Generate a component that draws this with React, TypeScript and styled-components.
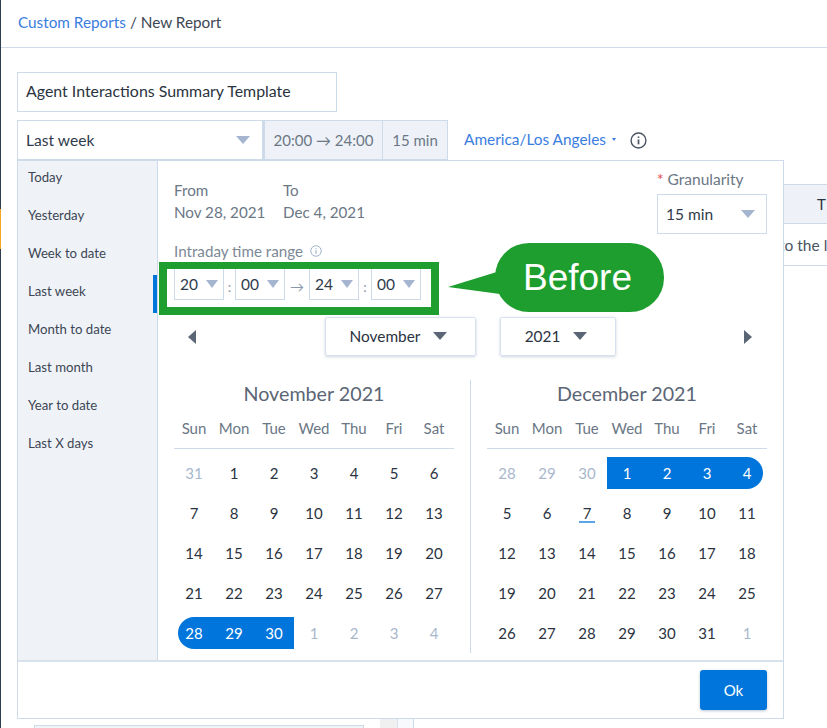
import * as React from 'react'
import styled, { createGlobalStyle } from 'styled-components'

const GlobalStyle = createGlobalStyle`
  html, body {
    margin: 0;
    padding: 0;
    background: #fff;
  }
  body {
    font-family: 'Lato', 'Noto Sans', sans-serif;
    color: #2f3b4c;
  }
`

const Page = styled.div`
  position: relative;
  width: 827px;
  height: 728px;
  overflow: hidden;
  background: #fff;
`

const AppEdge = styled.div`
  position: absolute;
  left: 0;
  top: 0;
  bottom: 0;
  width: 1px;
  background: #2c3e50;
  &::after {
    content: '';
    position: absolute;
    left: 0;
    top: 209px;
    height: 40px;
    width: 1px;
    background: #f5a623;
  }
`

const Header = styled.header`
  height: 47px;
  box-sizing: border-box;
  display: flex;
  align-items: center;
  padding: 0 0 3px 18px;
  font-size: 15.3px;
  margin-bottom: 1px;
  box-shadow: 0 1px 0 #cfdbe8;
`

const Crumb = styled.a`
  color: #3a7de0;
`

const CrumbRest = styled.span`
  margin-left: 4px;
  color: #3d4654;
`

const Form = styled.div`
  padding: 24px 0 0 17px;
`

const NameInput = styled.div`
  width: 320px;
  height: 40px;
  box-sizing: border-box;
  border: 1px solid #cddaea;
  padding: 0 0 4px 8px;
  display: flex;
  align-items: center;
  font-size: 15.9px;
  color: #2a3340;
`

const Toolbar = styled.div`
  display: flex;
  align-items: center;
  margin-top: 8px;
  height: 40px;
`

const MainSelect = styled.div`
  width: 246px;
  height: 40px;
  box-sizing: border-box;
  border: 1px solid #cddaea;
  padding: 0 12px 0 8px;
  display: flex;
  align-items: center;
  justify-content: space-between;
  font-size: 15.6px;
`

const Chip = styled.div<{ $w: number; $first?: boolean }>`
  width: ${p => p.$w}px;
  height: 40px;
  box-sizing: border-box;
  border: 1px solid #cddaea;
  border-left-width: ${p => (p.$first ? 2 : 1)}px;
  background: #eef2f8;
  color: #6b7785;
  font-size: 15px;
  display: flex;
  align-items: center;
  justify-content: center;
  margin-left: ${p => (p.$first ? 0 : -1)}px;
`

const Zone = styled.a`
  margin-left: 16px;
  padding-bottom: 2px;
  color: #3a7de0;
  font-size: 15.4px;
  display: flex;
  align-items: center;
  gap: 6px;
`

const InfoWrap = styled.span`
  margin-left: 14px;
  display: flex;
`

const Caret = styled.span<{ $color?: string; $w?: number; $h?: number }>`
  display: inline-block;
  width: 0;
  height: 0;
  border-left: ${p => p.$w ?? 7}px solid transparent;
  border-right: ${p => p.$w ?? 7}px solid transparent;
  border-top: ${p => p.$h ?? 8}px solid ${p => p.$color ?? '#a5b5cf'};
`

const BehindTable = styled.div`
  margin: 24px 0 0 784px;
  width: 60px;
`

const BehindHead = styled.div`
  height: 40px;
  box-sizing: border-box;
  background: #eef2f8;
  border-top: 1px solid #cddaea;
  border-bottom: 1px solid #cddaea;
  display: flex;
  align-items: center;
  padding-left: 33px;
  font-size: 15px;
  color: #2a3340;
`

const BehindRow = styled.div`
  height: 42px;
  box-sizing: border-box;
  border-bottom: 1px solid #cddaea;
  padding: 13px 0 0 0;
  font-size: 15.5px;
  line-height: 17px;
  white-space: nowrap;
  color: #4a5462;
  text-indent: -5px;
`

const Popover = styled.div`
  position: absolute;
  left: 17px;
  top: 160px;
  width: 767px;
  height: 559px;
  box-sizing: border-box;
  border: 1px solid #cddaea;
  background: #fff;
  display: flex;
  flex-direction: column;
`

const PopBody = styled.div`
  display: flex;
  height: 501px;
  flex: none;
  box-sizing: border-box;
  border-bottom: 2px solid #d8e2ee;
`

const Sidebar = styled.ul`
  list-style: none;
  margin: 0;
  padding: 0;
  width: 140px;
  box-sizing: border-box;
  flex: none;
  background: #eff3f8;
  border-right: 1px solid #cddaea;
`

const SideItem = styled.li<{ $active?: boolean }>`
  position: relative;
  height: 38px;
  box-sizing: border-box;
  display: flex;
  align-items: center;
  padding: 0 0 6px 10px;
  font-size: 13.2px;
  color: #3d4654;
  ${p =>
    p.$active &&
    `&::after {
      content: '';
      position: absolute;
      right: 0;
      top: 0;
      width: 4px;
      height: 38px;
      background: #0075db;
    }`}
`

const Main = styled.div`
  flex: 1;
  padding: 0 16px;
  display: flex;
  flex-direction: column;
`

const TopRow = styled.div`
  display: flex;
  justify-content: space-between;
  height: 83px;
`

const Range = styled.div`
  display: flex;
  padding-top: 18px;
`

const RangeCol = styled.div<{ $w: number }>`
  width: ${p => p.$w}px;
  font-size: 15.2px;
  color: #6b7785;
  line-height: 22px;
`

const Gran = styled.div`
  width: 110px;
  padding-top: 9px;
`

const GranLabel = styled.div`
  font-size: 15.5px;
  line-height: 18px;
  color: #6b7785;
  margin-bottom: 6px;
  span {
    color: #e5484d;
    margin-right: 4px;
  }
`

const GranSelect = styled.div`
  height: 40px;
  box-sizing: border-box;
  border: 1px solid #cddaea;
  padding: 0 11px 0 8px;
  display: flex;
  align-items: center;
  justify-content: space-between;
  font-size: 15.5px;
`

const IntraLabel = styled.div`
  height: 16px;
  display: flex;
  align-items: center;
  gap: 7px;
  font-size: 15.2px;
  color: #7d8896;
  margin-top: -1px;
`

const TimeRow = styled.div`
  display: flex;
  align-items: center;
  margin-top: 9px;
  height: 32px;
`

const TimeSelect = styled.div`
  width: 50px;
  height: 32px;
  box-sizing: border-box;
  border: 1px solid #cddaea;
  padding: 0 5px 1px 5px;
  display: flex;
  align-items: center;
  justify-content: space-between;
  font-size: 15.5px;
`

const TimeSep = styled.span<{ $w: number }>`
  width: ${p => p.$w}px;
  text-align: center;
  color: #8a97a8;
  font-size: 14px;
  padding-top: 5px;
`

const NavRow = styled.div`
  display: flex;
  align-items: center;
  margin-top: 17px;
  height: 39px;
  padding: 0 15px 0 14px;
`

const NavArrow = styled.span<{ $dir: 'left' | 'right' }>`
  width: 0;
  height: 0;
  border-top: 7px solid transparent;
  border-bottom: 7px solid transparent;
  ${p =>
    p.$dir === 'left'
      ? 'border-right: 8px solid #5a6675;'
      : 'border-left: 8px solid #5a6675;'}
`

const NavSelects = styled.div`
  flex: 1;
  display: flex;
  padding-left: 129px;
  gap: 24px;
`

const NavSelect = styled.div<{ $w: number }>`
  width: ${p => p.$w}px;
  height: 39px;
  box-sizing: border-box;
  border: 1px solid #d8e2ee;
  border-radius: 2px;
  box-shadow: 0 1px 3px rgba(60, 90, 130, 0.25);
  display: flex;
  align-items: center;
  justify-content: center;
  gap: 13px;
  padding: 0 4px 1px 0;
  font-size: 15.4px;
  color: #2a3340;
`

const Calendars = styled.div`
  display: flex;
  margin-top: 24px;
  height: 273px;
`

const Month = styled.div`
  width: 280px;
  flex: none;
`

const MonthTitle = styled.div`
  height: 28px;
  line-height: 28px;
  text-align: center;
  font-size: 19.7px;
  color: #5b6675;
`

const WeekRow = styled.div`
  display: grid;
  grid-template-columns: repeat(7, 40px);
  height: 41px;
  box-sizing: border-box;
  border-bottom: 1px solid #cddaea;
  align-items: center;
  text-align: center;
  font-size: 15px;
  color: #6b7785;
`

const DayGrid = styled.div`
  display: grid;
  grid-template-columns: repeat(7, 40px);
  grid-auto-rows: 40px;
  margin-top: 4px;
`

const DayCell = styled.div<{ $muted?: boolean; $sel?: 'start' | 'mid' | 'end' }>`
  display: flex;
  align-items: center;
  justify-content: center;
  height: 32px;
  margin-top: 4px;
  font-size: 15px;
  color: ${p => (p.$sel ? '#fff' : p.$muted ? '#a9b7cc' : '#2a3340')};
  background: ${p => (p.$sel ? '#0075db' : 'transparent')};
  ${p => p.$sel === 'start' && 'margin-left: 4px; padding-right: 4px; border-radius: 16px 0 0 16px;'}
  ${p => p.$sel === 'end' && 'margin-right: 4px; padding-left: 4px; border-radius: 0 16px 16px 0;'}
`

const Today = styled.span`
  display: inline-block;
  padding: 0 4px 0;
  line-height: 16px;
  border-bottom: 2px solid #5aa5e8;
  margin-bottom: -2px;
`

const MonthDivider = styled.div`
  width: 1px;
  margin: 0 16px;
  background: #cddaea;
  flex: none;
`

const Footer = styled.div`
  flex: 1;
  display: flex;
  justify-content: flex-end;
  padding: 8px 16px 0 0;
`

const OkButton = styled.button`
  width: 67px;
  height: 40px;
  border: none;
  border-radius: 3px;
  background: #0075db;
  color: #fff;
  font-family: inherit;
  font-size: 15px;
  box-shadow: 0 1px 3px rgba(60, 90, 130, 0.35);
`

const Highlight = styled.div`
  position: absolute;
  left: 159px;
  top: 262px;
  width: 280px;
  height: 53px;
  box-sizing: border-box;
  border: 8px solid #1e9e2e;
  border-top-width: 7px;
  pointer-events: none;
`

const Bubble = styled.div`
  position: absolute;
  left: 495px;
  top: 243px;
  width: 169px;
  height: 69px;
  border-radius: 34px;
  background: #1e9e2e;
  color: #fff;
  font-family: 'Liberation Sans', Arial, sans-serif;
  font-size: 37px;
  display: flex;
  align-items: center;
  justify-content: center;
  padding-right: 4px;
  box-sizing: border-box;
  &::before {
    content: '';
    position: absolute;
    left: -47px;
    top: 28px;
    width: 52px;
    height: 23px;
    background: #1e9e2e;
    clip-path: polygon(0 70%, 100% 0, 100% 100%);
  }
`

const BackBox = styled.div`
  position: absolute;
  left: 34px;
  top: 725px;
  width: 330px;
  height: 10px;
  box-sizing: border-box;
  border: 1px solid #cddaea;
  background: #f1f4f9;
`

const BackGutter = styled.div`
  position: absolute;
  left: 380px;
  top: 719px;
  width: 17px;
  height: 9px;
  background: #f0f0f0;
  border-right: 1px solid #d8e2ee;
`

const BackTrack = styled.div`
  position: absolute;
  left: 398px;
  top: 719px;
  width: 15px;
  height: 9px;
  background: #f7f9fc;
  border-right: 1px solid #cddaea;
`

type DayT = { n: number; muted?: boolean; sel?: 'start' | 'mid' | 'end'; today?: boolean }

const WEEKDAYS = ['Sun', 'Mon', 'Tue', 'Wed', 'Thu', 'Fri', 'Sat']
const PRESETS = ['Today', 'Yesterday', 'Week to date', 'Last week', 'Month to date', 'Last month', 'Year to date', 'Last X days']

const NOV: DayT[] = [
  { n: 31, muted: true },
  ...Array.from({ length: 27 }, (_, i) => ({ n: i + 1 })),
  { n: 28, sel: 'start' as const },
  { n: 29, sel: 'mid' as const },
  { n: 30, sel: 'mid' as const },
  { n: 1, muted: true },
  { n: 2, muted: true },
  { n: 3, muted: true },
  { n: 4, muted: true },
]

const DEC: DayT[] = [
  { n: 28, muted: true },
  { n: 29, muted: true },
  { n: 30, muted: true },
  { n: 1, sel: 'mid' },
  { n: 2, sel: 'mid' },
  { n: 3, sel: 'mid' },
  { n: 4, sel: 'end' },
  ...Array.from({ length: 27 }, (_, i) => ({ n: i + 5, today: i === 2 })),
  { n: 1, muted: true },
]

function InfoIcon({ size, color }: { size: number; color: string }) {
  return (
    <svg width={size} height={size} viewBox="0 0 16 16" fill="none" stroke={color} strokeWidth="1.3">
      <circle cx="8" cy="8" r="7" />
      <path d="M8 7v4.6" strokeWidth="1.6" />
      <path d="M8 4.2v1.4" strokeWidth="1.6" />
    </svg>
  )
}

function MonthView({ title, days }: { title: string; days: DayT[] }) {
  return (
    <Month>
      <MonthTitle>{title}</MonthTitle>
      <WeekRow>
        {WEEKDAYS.map(d => (
          <span key={d}>{d}</span>
        ))}
      </WeekRow>
      <DayGrid>
        {days.map((d, i) => (
          <DayCell key={i} $muted={d.muted} $sel={d.sel}>
            {d.today ? <Today>{d.n}</Today> : d.n}
          </DayCell>
        ))}
      </DayGrid>
    </Month>
  )
}

export default function App() {
  return (
    <Page>
      <GlobalStyle />
      <AppEdge />
      <Header>
        <Crumb>Custom Reports</Crumb>
        <CrumbRest>/ New Report</CrumbRest>
      </Header>
      <Form>
        <NameInput>Agent Interactions Summary Template</NameInput>
        <Toolbar>
          <MainSelect>
            Last week
            <Caret />
          </MainSelect>
          <Chip $w={120} $first>20:00 → 24:00</Chip>
          <Chip $w={66}>15 min</Chip>
          <Zone>
            America/Los Angeles
            <Caret $color="#3a7de0" $w={2} $h={3} />
          </Zone>
          <InfoWrap>
            <InfoIcon size={17} color="#4a5462" />
          </InfoWrap>
        </Toolbar>
      </Form>
      <BehindTable>
        <BehindHead>T</BehindHead>
        <BehindRow>to the l</BehindRow>
      </BehindTable>
      <BackBox />
      <BackGutter />
      <BackTrack />
      <Popover>
        <PopBody>
          <Sidebar>
            {PRESETS.map(p => (
              <SideItem key={p} $active={p === 'Last week'}>
                {p}
              </SideItem>
            ))}
          </Sidebar>
          <Main>
            <TopRow>
              <Range>
                <RangeCol $w={109}>
                  From
                  <br />
                  Nov 28, 2021
                </RangeCol>
                <RangeCol $w={100}>
                  To
                  <br />
                  Dec 4, 2021
                </RangeCol>
              </Range>
              <Gran>
                <GranLabel>
                  <span>*</span>Granularity
                </GranLabel>
                <GranSelect>
                  15 min
                  <Caret />
                </GranSelect>
              </Gran>
            </TopRow>
            <IntraLabel>
              Intraday time range
              <InfoIcon size={12} color="#9fb2cc" />
            </IntraLabel>
            <TimeRow>
              <TimeSelect>
                20
                <Caret $w={6.5} />
              </TimeSelect>
              <TimeSep $w={11}>:</TimeSep>
              <TimeSelect>
                00
                <Caret $w={6.5} />
              </TimeSelect>
              <TimeSep $w={24}>→</TimeSep>
              <TimeSelect>
                24
                <Caret $w={6.5} />
              </TimeSelect>
              <TimeSep $w={12}>:</TimeSep>
              <TimeSelect>
                00
                <Caret $w={6.5} />
              </TimeSelect>
            </TimeRow>
            <NavRow>
              <NavArrow $dir="left" />
              <NavSelects>
                <NavSelect $w={151}>
                  November
                  <Caret $color="#5a6675" $w={7} $h={8} />
                </NavSelect>
                <NavSelect $w={116}>
                  2021
                  <Caret $color="#5a6675" $w={7} $h={8} />
                </NavSelect>
              </NavSelects>
              <NavArrow $dir="right" />
            </NavRow>
            <Calendars>
              <MonthView title="November 2021" days={NOV} />
              <MonthDivider />
              <MonthView title="December 2021" days={DEC} />
            </Calendars>
          </Main>
        </PopBody>
        <Footer>
          <OkButton>Ok</OkButton>
        </Footer>
      </Popover>
      <Highlight />
      <Bubble>Before</Bubble>
    </Page>
  )
}
